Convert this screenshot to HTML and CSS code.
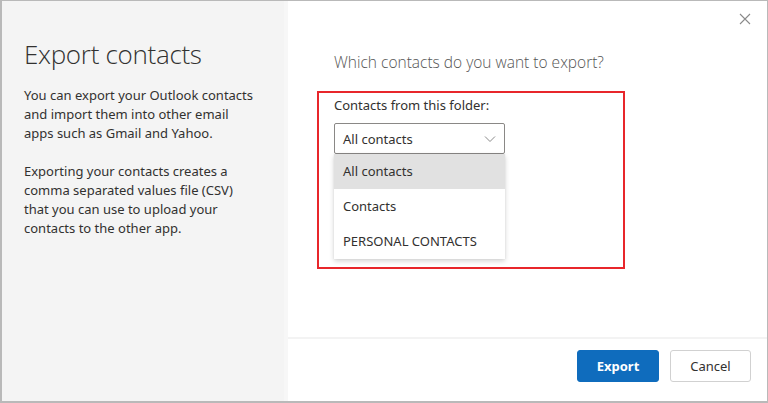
FILE: index.html
```html
<!DOCTYPE html>
<html>
<head>
<meta charset="utf-8">
<link rel="stylesheet" href="styles.css">
</head>
<body>
<div class="dialog">
  <aside class="side">
    <h1 class="title">Export contacts</h1>
    <p class="desc">You can export your Outlook contacts and import them into other email apps such as Gmail and Yahoo.</p>
    <p class="desc">Exporting your contacts creates a comma separated values file (CSV) that you can use to upload your contacts to the other app.</p>
  </aside>
  <section class="main">
    <div class="topbar">
      <svg class="close" width="12" height="12" viewBox="0 0 12 12"><path d="M1 1L11 11M11 1L1 11" stroke="#8a8a8a" stroke-width="1.1" fill="none"/></svg>
    </div>
    <div class="content">
      <h2 class="question">Which contacts do you want to export?</h2>
      <div class="highlight">
        <div class="label">Contacts from this folder:</div>
        <div class="select">
          <span>All contacts</span>
          <svg width="12" height="8" viewBox="0 0 12 8"><path d="M1 1.5L6 6.5L11 1.5" stroke="#8a8a8a" stroke-width="1" fill="none"/></svg>
        </div>
        <ul class="menu">
          <li class="item selected">All contacts</li>
          <li class="item">Contacts</li>
          <li class="item">PERSONAL CONTACTS</li>
        </ul>
      </div>
    </div>
    <footer class="footer">
      <button class="btn primary">Export</button>
      <button class="btn">Cancel</button>
    </footer>
  </section>
</div>
</body>
</html>
```
FILE: styles.css
```css
html, body {
  margin: 0;
  padding: 0;
  background: #ffffff;
}
body {
  font-family: "Noto Sans", "Open Sans", sans-serif;
  color: #323130;
}
.dialog {
  width: 768px;
  height: 403px;
  box-sizing: border-box;
  border: 1px solid #b9b9b9;
  border-left-width: 2px;
  border-bottom-width: 2px;
  display: flex;
  overflow: hidden;
}
.side {
  flex: none;
  width: 286px;
  background: #f4f4f4;
  border-right: 4px solid #f7f7f7;
  padding: 36px 0 0 22px;
  box-sizing: border-box;
}
.title {
  margin: 0 0 15px 0;
  font-family: "Open Sans", sans-serif;
  font-weight: 300;
  font-size: 26px;
  line-height: 34px;
  color: #323130;
  letter-spacing: -0.3px;
}
.desc {
  width: 232px;
  margin: 0 0 19px 0;
  font-size: 13px;
  line-height: 19px;
  color: #323130;
}
.main {
  flex: 1;
  display: flex;
  flex-direction: column;
  min-width: 0;
}
.topbar {
  height: 36px;
  display: flex;
  justify-content: flex-end;
  align-items: flex-start;
  padding: 12px 16px 0 0;
  box-sizing: border-box;
}
.close {
  display: block;
}
.content {
  flex: 1;
  padding: 14px 0 0 29px;
}
.question {
  margin: 0 0 18px 17px;
  font-family: "Open Sans", sans-serif;
  font-weight: 300;
  font-size: 15.5px;
  line-height: 22px;
  color: #555555;
}
.highlight {
  width: 308px;
  height: 178px;
  border: 2px solid #e8262b;
  box-sizing: border-box;
  padding: 3px 0 0 15px;
}
.label {
  font-size: 13px;
  line-height: 18px;
  color: #323130;
  margin-bottom: 9px;
}
.select {
  width: 171px;
  height: 31px;
  box-sizing: border-box;
  border: 1px solid #8a8886;
  border-radius: 2px;
  display: flex;
  align-items: center;
  justify-content: space-between;
  padding: 0 8px 0 8px;
  font-size: 13px;
  color: #323130;
}
.menu {
  list-style: none;
  margin: 0;
  padding: 0;
  width: 171px;
  background: #ffffff;
  box-shadow: 0 2px 5px rgba(0,0,0,0.18), 0 0 1px rgba(0,0,0,0.1);
}
.item {
  height: 35px;
  line-height: 35px;
  padding-left: 9px;
  font-size: 13px;
  color: #323130;
}
.item.selected {
  background: #e1e1e1;
}
.footer {
  height: 64px;
  flex: none;
  border-top: 2px solid #f3f3f3;
  box-sizing: border-box;
  display: flex;
  justify-content: flex-end;
  align-items: flex-start;
  padding: 11px 16px 0 0;
  gap: 11px;
}
.btn {
  width: 81px;
  height: 32px;
  box-sizing: border-box;
  border: 1px solid #d1d1d1;
  border-radius: 3px;
  background: #ffffff;
  font-family: "Noto Sans", "Open Sans", sans-serif;
  font-size: 13px;
  color: #323130;
  padding: 0;
}
.btn.primary {
  width: 82px;
  background: #0f6cbd;
  border-color: #0f6cbd;
  color: #ffffff;
  font-weight: 700;
}
```
